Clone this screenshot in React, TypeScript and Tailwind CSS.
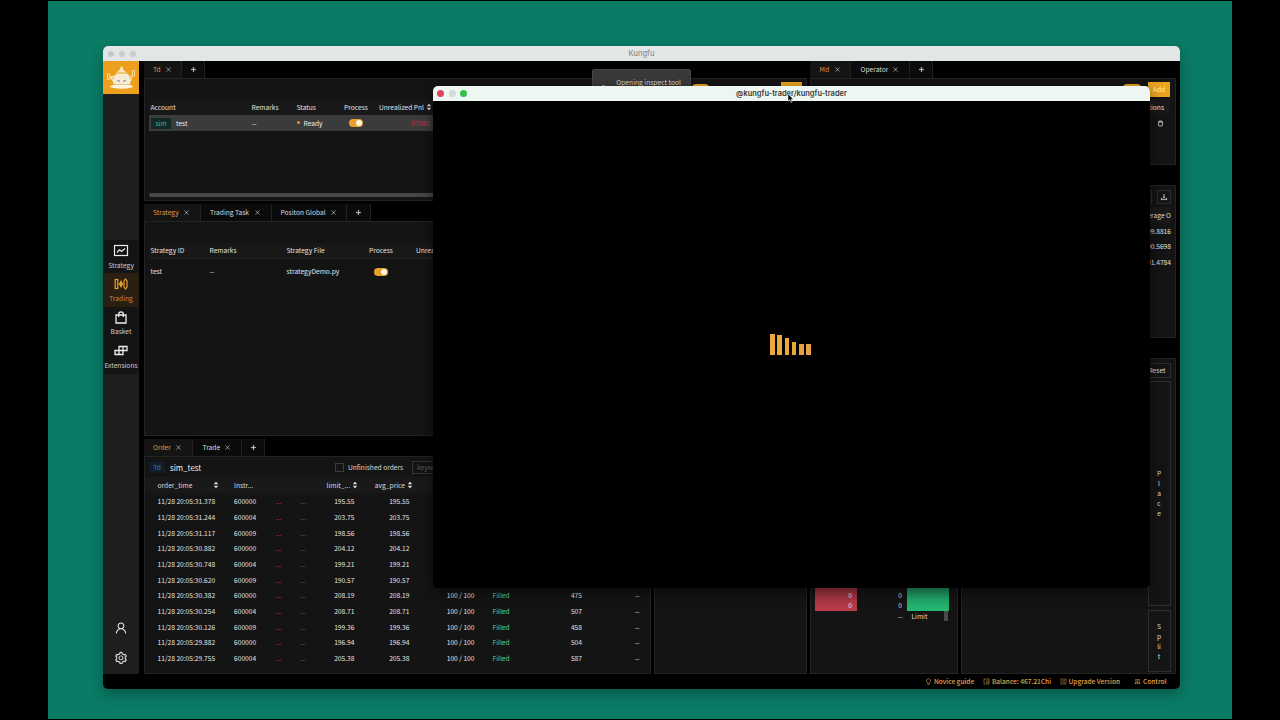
import type { ReactNode } from "react";
import {
  AiFillCaretDown,
  AiFillCaretUp,
  AiOutlineBulb,
  AiOutlineClose,
  AiOutlineCluster,
  AiOutlineDelete,
  AiOutlineDownload,
  AiOutlinePlus,
  AiOutlineProfile,
  AiOutlineSetting,
  AiOutlineUser,
  AiOutlineWallet,
} from "react-icons/ai";

type OrderType = {
  time: string;
  instrument: string;
  price: string;
  latency: string;
};

type TabType = {
  label: string;
  size: string;
};

const orders: OrderType[] = [
  { time: "11/28 20:05:31.378", instrument: "600000", price: "195.55", latency: "491" },
  { time: "11/28 20:05:31.244", instrument: "600004", price: "203.75", latency: "502" },
  { time: "11/28 20:05:31.117", instrument: "600009", price: "198.56", latency: "488" },
  { time: "11/28 20:05:30.882", instrument: "600000", price: "204.12", latency: "513" },
  { time: "11/28 20:05:30.748", instrument: "600004", price: "199.21", latency: "476" },
  { time: "11/28 20:05:30.620", instrument: "600009", price: "190.57", latency: "495" },
  { time: "11/28 20:05:30.382", instrument: "600000", price: "208.19", latency: "475" },
  { time: "11/28 20:05:30.254", instrument: "600004", price: "208.71", latency: "507" },
  { time: "11/28 20:05:30.126", instrument: "600009", price: "199.36", latency: "458" },
  { time: "11/28 20:05:29.882", instrument: "600000", price: "196.94", latency: "504" },
  { time: "11/28 20:05:29.755", instrument: "600004", price: "205.38", latency: "587" },
];

const Sorter = () => (
  <span className="inline-flex flex-col text-[6px] leading-none text-[#dcdcdc]">
    <AiFillCaretUp className="-mb-[2px]" />
    <AiFillCaretDown />
  </span>
);

const Toggle = () => (
  <span className="flex h-2 w-3.5 items-center justify-end rounded-full bg-[#e8a02b] pr-px">
    <span className="size-1.5 rounded-full bg-[#fff6dd]" />
  </span>
);

const TabBar = ({ tabs, plusWidth }: { tabs: TabType[]; plusWidth: string }) => (
  <div className="flex h-[17px] shrink-0">
    {tabs.map((tab, i) => (
      <div
        key={tab.label}
        className={`flex items-center justify-between border-r border-[#202020] ${tab.size} ${
          i === 0 ? "bg-[#141414] text-[#dc9748]" : "bg-[#0b0b0b] text-[#dadada]"
        }`}
      >
        <span>{tab.label}</span>
        <AiOutlineClose className="size-[7px] text-[#a8a8a8]" />
      </div>
    ))}
    <div className={`flex items-center justify-center border-r border-[#202020] bg-[#0b0b0b] ${plusWidth}`}>
      <AiOutlinePlus className="size-[7px] stroke-[50px] text-[#e0e0e0]" />
    </div>
  </div>
);

const Panel = ({ children, className = "" }: { children?: ReactNode; className?: string }) => (
  <div className={`min-h-0 flex-1 overflow-hidden border border-[#242424] bg-[#141414] ${className}`}>{children}</div>
);

const Logo = () => (
  <svg viewBox="0 0 36 33" className="h-[33px] w-9 shrink-0">
    <rect width="36" height="33" fill="#eda01e" />
    <path d="M12.500 11.500Q17 10 17.500 6.500L18.500 5l1.200 1.500Q20 10 24.500 11.500z" fill="#fde9be" />
    <path d="M13.500 12.500h10.500c3 2 4 6 3 11H11c-1.500-4-.5-9 2.500-11z" fill="#f6ecd6" />
    <path d="M11.500 21.500L7.500 16l3.500-.5" stroke="#f6ecd6" strokeWidth="1.500" fill="none" />
    <path d="M26 20.500c2.500-1 2.500-3.500 2-6" stroke="#f6ecd6" strokeWidth="1.200" fill="none" />
    <ellipse cx="18.500" cy="25.500" rx="11.500" ry="2.200" fill="#fff5df" />
    <path d="M10 23.500h17" stroke="#d9bf8c" strokeWidth=".7" />
    <path d="M14.500 19.500l2.500 .8M22.500 19.500l-2.500 .8" stroke="#6c604c" strokeWidth=".9" />
    <rect x="4.500" y="13" width="2" height="5.500" fill="none" stroke="#ffe3a6" strokeWidth=".8" />
    <rect x="29.500" y="9.500" width="2" height="5.500" fill="none" stroke="#ffe3a6" strokeWidth=".8" />
  </svg>
);

const StrategyIcon = () => (
  <svg viewBox="0 0 16 14" className="h-[14px] w-4" fill="none" stroke="currentColor" strokeWidth="1.2">
    <rect x="1.500" y="1.500" width="13" height="10" />
    <path d="M4 8.500l2.600-2.600 2 1.600L12 4.500" />
  </svg>
);

const TradingIcon = () => (
  <svg viewBox="0 0 16 14" className="h-[14px] w-4" fill="none" stroke="currentColor" strokeWidth="1.2">
    <rect x="2.200" y="2.500" width="2.600" height="9" />
    <path d="M8 3.500v7" />
    <path d="M8 4.800L9.600 7 8 9.200 6.400 7z" fill="currentColor" />
    <path d="M12.500 2l1.500 2v6l-1.500 2-1.500-2V4z" />
  </svg>
);

const BasketIcon = () => (
  <svg viewBox="0 0 16 14" className="h-[14px] w-4" fill="none" stroke="currentColor" strokeWidth="1.3">
    <path d="M3 4h10v8H3z" />
    <path d="M5.700 6V3.200a2.300 2.300 0 0 1 4.600 0v2.800" />
  </svg>
);

const ExtensionsIcon = () => (
  <svg viewBox="0 0 16 14" className="h-[14px] w-4" fill="none" stroke="currentColor" strokeWidth="1.3">
    <path d="M6 2.500h8v4H6zM10 2.500v4M2 6.500h8v4H2zM6 6.500v4" />
  </svg>
);

const menus = [
  { label: "Strategy", icon: <StrategyIcon /> },
  { label: "Trading", icon: <TradingIcon /> },
  { label: "Basket", icon: <BasketIcon /> },
  { label: "Extensions", icon: <ExtensionsIcon /> },
];

const Sidebar = () => (
  <div className="flex w-9 shrink-0 flex-col bg-[#1e1e1e]">
    <Logo />
    <div className="mt-[146px] mr-px ml-px bg-[#141414]">
      {menus.map((menu) => (
        <div
          key={menu.label}
          className={`-mr-px flex h-[33.4px] flex-col items-center pt-[4px] pr-px ${
            menu.label === "Trading" ? "bg-[#2a1f10] text-[#e8a02b]" : "text-[#ececec]"
          }`}
        >
          {menu.icon}
          <span
            className={`mt-[2.500px] leading-[9px] ${menu.label === "Trading" ? "text-[#c08c50]" : "text-[#cccccc]"}`}
          >
            {menu.label}
          </span>
        </div>
      ))}
    </div>
    <div className="mt-auto flex flex-col items-center gap-4 pb-[9px] text-[#ececec]">
      <AiOutlineUser className="size-[14px]" />
      <AiOutlineSetting className="size-[14px]" />
    </div>
  </div>
);

const TdBoard = () => (
  <div className="flex h-[140px] flex-col">
    <TabBar tabs={[{ label: "Td", size: "w-[38px] pl-[9px] pr-[9px]" }]} plusWidth="w-[23px]" />
    <Panel className="flex flex-col px-1">
      <div className="flex h-5 shrink-0 items-center justify-end gap-[72px]">
        <span className="h-[10px] w-[17px] rounded-sm bg-[#eba41f]" />
        <span className="h-[14px] w-[21px] bg-[#eba41f]" />
      </div>
      <div className="grid h-4 shrink-0 grid-cols-[101px_45px_47.500px_35px_60px] items-center bg-[#181818] pl-[1.5px] text-[#e2e2e2]">
        <span>Account</span>
        <span>Remarks</span>
        <span>Status</span>
        <span>Process</span>
        <span className="flex items-center gap-[2px] whitespace-nowrap">
          Unrealized Pnl <Sorter />
        </span>
      </div>
      <div className="grid h-4 shrink-0 grid-cols-[101px_45px_52px_34px_47px] items-center bg-[#3b3b3b] pl-[2px] text-[#ececec]">
        <span className="flex items-center gap-[5px]">
          <span className="flex h-[11px] w-5 items-center justify-center bg-[#112a26] text-[#3fb796]">sim</span>
          test
        </span>
        <span>--</span>
        <span className="flex items-center gap-[3.500px]">
          <span className="size-[3px] rounded-full bg-[#e8912b]" />
          Ready
        </span>
        <Toggle />
        <span className="text-right text-[#cf3044]">97880</span>
      </div>
      <div className="mt-auto mb-[3px] h-1 shrink-0 rounded-full bg-[#474747]" />
    </Panel>
  </div>
);

const StrategyBoard = () => (
  <div className="flex h-[232px] flex-col">
    <TabBar
      tabs={[
        { label: "Strategy", size: "w-[57px] pl-[9px] pr-[10px]" },
        { label: "Trading Task", size: "w-[71px] pl-[9px] pr-[10px]" },
        { label: "Positon Global", size: "w-[75px] pl-[8.500px] pr-[9px]" },
      ]}
      plusWidth="w-6"
    />
    <Panel className="px-1 pt-[21px]">
      <div className="grid h-4 grid-cols-[59px_77px_82.500px_47px_60px] items-center border-b border-[#202020] bg-[#181818] pl-[1.5px] whitespace-nowrap text-[#e2e2e2]">
        <span>Strategy ID</span>
        <span>Remarks</span>
        <span>Strategy File</span>
        <span>Process</span>
        <span>Unrealized Pnl</span>
      </div>
      <div className="grid h-[25px] grid-cols-[59px_77px_87.500px_42px] items-center pl-[1.5px] text-[#e2e2e2]">
        <span>test</span>
        <span>--</span>
        <span>strategyDemo.py</span>
        <Toggle />
      </div>
    </Panel>
  </div>
);

const OrderBoard = () => (
  <div className="flex w-[507px] flex-col">
    <TabBar
      tabs={[
        { label: "Order", size: "w-[49px] pl-[9px] pr-[10px]" },
        { label: "Trade", size: "w-[49px] pl-[9.500px] pr-[10px]" },
      ]}
      plusWidth="w-[23px]"
    />
    <Panel>
      <div className="flex h-[20px] items-center pt-px pl-1">
        <span className="flex h-[11px] w-4 items-center justify-center bg-[#111d2c] text-[#4478b8]">Td</span>
        <span className="ml-[5px] w-[165px] text-[7.9px] text-[#f0f0f0]">sim_test</span>
        <span className="size-[9px] border border-[#3c3c3c]" />
        <span className="ml-1 w-[64px] text-[#dadada]">Unfinished orders</span>
        <span className="flex h-[13px] w-[90px] items-center border border-[#333] pl-1 text-[#5c5c5c]">keyword</span>
      </div>
      <div className="mb-[0.7px] flex h-4 items-center bg-[#191919] pl-[12.5px] text-[#dadada]">
        <span className="w-[55.500px]">order_time</span>
        <Sorter />
        <span className="ml-[15px] w-[93px]">Instr...</span>
        <span className="flex w-[31px] items-center justify-end gap-[2px]">
          limit_... <Sorter />
        </span>
        <span className="flex w-[55px] items-center justify-end gap-[2px]">
          avg_price <Sorter />
        </span>
      </div>
      {orders.map((order) => (
        <div
          key={order.time}
          className="grid h-[15.7px] grid-cols-[76.5px_41.5px_25px_20px_34px_55px_65px_60px_47.5px_57.5px] items-center pl-[12.5px] whitespace-nowrap text-[#e2e2e2]"
        >
          <span>{order.time}</span>
          <span>{order.instrument}</span>
          <span className="text-[#b04450]">...</span>
          <span className="text-[#b04450]">...</span>
          <span className="text-right">{order.price}</span>
          <span className="text-right">{order.price}</span>
          <span className="text-right">100 / 100</span>
          <span className="pl-[18px] text-[#5cd68c]">Filled</span>
          <span className="text-right">{order.latency}</span>
          <span className="text-right">--</span>
        </div>
      ))}
    </Panel>
  </div>
);

const MdBoard = () => (
  <div className="flex h-[104px] flex-col">
    <TabBar
      tabs={[
        { label: "Md", size: "w-[41px] pl-[9.500px] pr-[9px]" },
        { label: "Operator", size: "w-[59px] pl-[9.500px] pr-[10px]" },
      ]}
      plusWidth="w-[23px]"
    />
    <Panel className="px-[5px]">
      <div className="flex h-5 items-center justify-end gap-[7px]">
        <span className="h-[10px] w-[18px] rounded-sm bg-[#eba41f]" />
        <span className="flex h-[15px] w-[22px] items-center justify-center bg-[#eba41f] text-[#fbeccb]">Add</span>
      </div>
      <div className="flex h-4 items-center justify-end bg-[#181818] pr-[6px] text-[#e2e2e2]">Actions</div>
      <div className="flex h-4 items-center justify-end pr-[6px] text-[#e2e2e2]">
        <AiOutlineDelete className="size-[7px] stroke-[30px]" />
      </div>
    </Panel>
  </div>
);

const PositionBoard = () => (
  <div className="flex h-[170px] flex-col">
    <TabBar tabs={[{ label: "Position", size: "w-[56px] pl-[9px] pr-[10px]" }]} plusWidth="w-[23px]" />
    <Panel className="px-1 pt-1">
      <div className="flex h-[17px] items-start justify-end gap-[5px]">
        <span className="h-[14px] w-10 border border-[#2e2e2e]" />
        <span className="flex size-[14px] items-center justify-center border border-[#2e2e2e] text-[#ececec]">
          <AiOutlineDownload className="size-[8px] stroke-[30px]" />
        </span>
      </div>
      <div className="flex h-4 items-center justify-end bg-[#191919] text-[#dadada]">Average O</div>
      {["199.8816", "190.5698", "191.4784"].map((cost) => (
        <div key={cost} className="flex h-[15.8px] items-center justify-end text-[#e2e2e2]">
          {cost}
        </div>
      ))}
    </Panel>
  </div>
);

const DepthBoard = () => (
  <div className="flex w-[148px] flex-col">
    <TabBar tabs={[{ label: "Depth", size: "w-[50px] pl-[9px] pr-[10px]" }]} plusWidth="w-[23px]" />
    <Panel className="pt-[211px] pr-[5px] pl-1 leading-[10px] text-[#ececec]">
      <div className="flex h-[41px] text-right">
        <div className="w-[42px] bg-linear-to-b from-[#822a36] to-[#bd3c4c] pt-5 pr-[5px]">
          <div>0</div>
          <div>0</div>
        </div>
        <div className="w-[50px] pt-5 pr-[5px] text-[#dadada]">
          <div>0</div>
          <div>0</div>
        </div>
        <div className="w-[42px] bg-linear-to-b from-[#178050] to-[#25b872]" />
      </div>
      <div className="flex h-[10px] text-[#dedede]">
        <span className="w-[87.500px] text-right">--</span>
        <span className="ml-[9px] flex-1">Limit</span>
        <span className="mr-[4px] w-1 bg-[#4a4a4a]" />
      </div>
    </Panel>
  </div>
);

const MakeOrderBoard = () => (
  <div className="flex min-w-0 flex-1 flex-col">
    <TabBar tabs={[{ label: "Make Order", size: "w-[66px] pl-[9px] pr-[10px]" }]} plusWidth="w-[23px]" />
    <Panel className="flex flex-col items-end pt-1 pr-[4px] text-[#dadada]">
      <div className="flex h-[15px] w-[28px] shrink-0 items-center justify-center border border-[#2e2e2e]">Reset</div>
      <div className="mt-[3px] flex h-[225px] w-[23px] shrink-0 flex-col items-center justify-center border border-[#2e2e2e] pr-px pb-[1px] leading-[10px]">
        <span>P</span>
        <span>l</span>
        <span>a</span>
        <span>c</span>
        <span>e</span>
      </div>
      <div className="mt-1 flex h-[62px] w-[23px] shrink-0 flex-col items-center justify-center border border-[#2e2e2e] pr-px leading-[10px]">
        <span>S</span>
        <span>p</span>
        <span>li</span>
        <span>t</span>
      </div>
    </Panel>
  </div>
);

const StatusBar = () => (
  <div className="flex h-[15px] shrink-0 items-center justify-end pr-[13.5px] text-[6.55px] font-medium text-[#e2a34b]">
    <span className="flex w-[58px] items-center gap-[1.5px]">
      <AiOutlineBulb className="size-[7px]" />
      Novice guide
    </span>
    <span className="flex w-[76.5px] items-center gap-[1.5px]">
      <AiOutlineWallet className="size-[7px]" />
      Balance: 467.21Chi
    </span>
    <span className="flex w-[74px] items-center gap-[1.5px]">
      <AiOutlineProfile className="size-[7px]" />
      Upgrade Version
    </span>
    <span className="flex items-center gap-[2px]">
      <AiOutlineCluster className="size-[7px]" />
      Control
    </span>
  </div>
);

const MainWindow = () => (
  <div className="absolute top-[46px] left-[103px] flex h-[643px] w-[1077px] flex-col overflow-hidden rounded-[5px] bg-black shadow-[0_5px_14px_rgba(0,0,0,0.3)]">
    <div className="flex h-[15px] shrink-0 items-center bg-[#e3e6e6] px-[5px] font-[Inter,sans-serif] text-[7.5px] font-medium text-[#8d9090]">
      <div className="flex w-8 gap-[5px]">
        <span className="size-[6px] rounded-full bg-[#c6c8c8]" />
        <span className="size-[6px] rounded-full bg-[#cbcdcd]" />
        <span className="size-[6px] rounded-full bg-[#cbcdcd]" />
      </div>
      <span className="flex-1 text-center">Kungfu</span>
      <div className="w-8" />
    </div>
    <div className="flex min-h-0 flex-1">
      <Sidebar />
      <div className="ml-[5px] flex w-[663px] shrink-0 flex-col gap-[3px]">
        <TdBoard />
        <StrategyBoard />
        <div className="flex min-h-0 flex-1 gap-[3px]">
          <OrderBoard />
          <div className="flex flex-1 flex-col pt-[17px]">
            <Panel />
          </div>
        </div>
      </div>
      <div className="ml-[3px] flex w-[366px] shrink-0 flex-col gap-[3px]">
        <MdBoard />
        <PositionBoard />
        <div className="flex min-h-0 flex-1 gap-[3px]">
          <DepthBoard />
          <MakeOrderBoard />
        </div>
      </div>
    </div>
    <StatusBar />
  </div>
);

const InspectWindow = () => (
  <div className="absolute top-[86px] left-[433px] flex h-[502px] w-[717px] flex-col overflow-hidden rounded-[5px] bg-black shadow-[0_4px_14px_rgba(0,0,0,0.5)]">
    <div className="flex h-[15px] shrink-0 items-center bg-[#eef6f2] px-[4px] font-[Inter,sans-serif] text-[7.45px] font-semibold text-[#333a37]">
      <div className="flex w-8 gap-[4.5px]">
        <span className="size-[7px] rounded-full bg-[#d9455a]" />
        <span className="size-[7px] rounded-full bg-[#d5dad8]" />
        <span className="size-[7px] rounded-full bg-[#35c04c]" />
      </div>
      <span className="flex-1 text-center">@kungfu-trader/kungfu-trader</span>
      <div className="w-8" />
    </div>
    <div className="flex flex-1 justify-center pt-[233px] pr-[2px]">
      <div className="flex h-[21px] items-end gap-[2.4px]">
        <span className="h-[21px] w-[4.8px] bg-[#eca73b]" />
        <span className="h-5 w-[4.8px] bg-[#eca73b]" />
        <span className="h-[17px] w-[4.8px] bg-[#eca73b]" />
        <span className="h-[13px] w-[4.8px] bg-[#eca73b]" />
        <span className="h-[11px] w-[4.8px] bg-[#e89f45]" />
        <span className="h-[11px] w-[4.8px] bg-[#e89f45]" />
      </div>
    </div>
  </div>
);

const App = () => {
  return (
    <div className="h-[720px] w-[1280px] overflow-hidden bg-black px-12 py-px font-['Noto_Sans_CJK_SC',sans-serif] text-[6.67px] leading-none">
      <div className="h-full bg-[#0a7b65]" />
      <MainWindow />
      <div className="absolute top-[69px] left-[592px] flex h-[34px] w-[99px] justify-between rounded-[2px] border border-[#454545] bg-[#393939] pt-[9px] pr-[9px] pl-[9px] text-[6.7px] text-[#d8d8d8]">
        <span className="mt-[6px] size-[3px] rounded-full bg-[#b0b0b0]" />
        <span>Opening inspect tool</span>
      </div>
      <InspectWindow />
      <svg viewBox="0 0 8 11" className="absolute top-[93px] left-[787px] h-[11px] w-2">
        <path d="M1 .8v7.400l1.700-1.500 1.200 2.900 1.300-.6L4 6.300h2.300z" fill="#000" stroke="#fff" strokeWidth=".5" />
      </svg>
    </div>
  );
};

export default App;
